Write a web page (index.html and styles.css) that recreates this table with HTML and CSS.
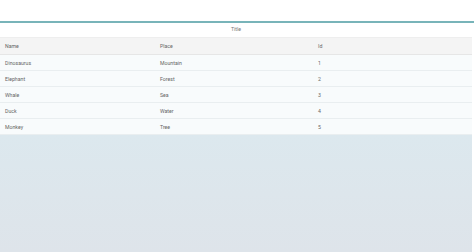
FILE: index.html
```html
<!DOCTYPE html>
<html>
<head>
<meta charset="utf-8">
<link rel="stylesheet" href="styles.css">
</head>
<body>
<div class="page">
  <div class="panel">
    <div class="title">Title</div>
    <div class="grid">
      <div class="row head"><div>Name</div><div>Place</div><div>Id</div></div>
      <div class="row"><div>Dinosaurus</div><div>Mountain</div><div>1</div></div>
      <div class="row"><div>Elephant</div><div>Forest</div><div>2</div></div>
      <div class="row"><div>Whale</div><div>Sea</div><div>3</div></div>
      <div class="row"><div>Duck</div><div>Water</div><div>4</div></div>
      <div class="row"><div>Monkey</div><div>Tree</div><div>5</div></div>
    </div>
    <div class="empty"></div>
  </div>
</div>
</body>
</html>
```

FILE: styles.css
```css
html, body { margin: 0; padding: 0; background: #fff; }
body { font-family: Roboto, "Liberation Sans", sans-serif; font-size: 5.2px; color: #666; }
.page { padding-top: 21px; height: 252px; box-sizing: border-box; display: flex; flex-direction: column; border-bottom: 0; }
.panel { border-top: 2px solid #78b4b9; flex: 1; display: flex; flex-direction: column; }
.title { height: 15px; line-height: 13px; text-align: center; color: #777; background: #fff; border-bottom: 1px solid #eee; box-sizing: border-box; width: 472px; }
.grid { width: 472px; }
.row { display: grid; grid-template-columns: 155px 158px 1fr; height: 16px; align-items: center; background: #f8fbfc; border-bottom: 1px solid #e9eef0; box-sizing: border-box; }
.row > div { padding-left: 5px; }
.row.head { background: #f4f4f4; border-bottom: 1px solid #e6e6e6; height: 17px; }
.empty { flex: 1; width: 472px; background: linear-gradient(#dce8ee, #dee4ea); }
```
